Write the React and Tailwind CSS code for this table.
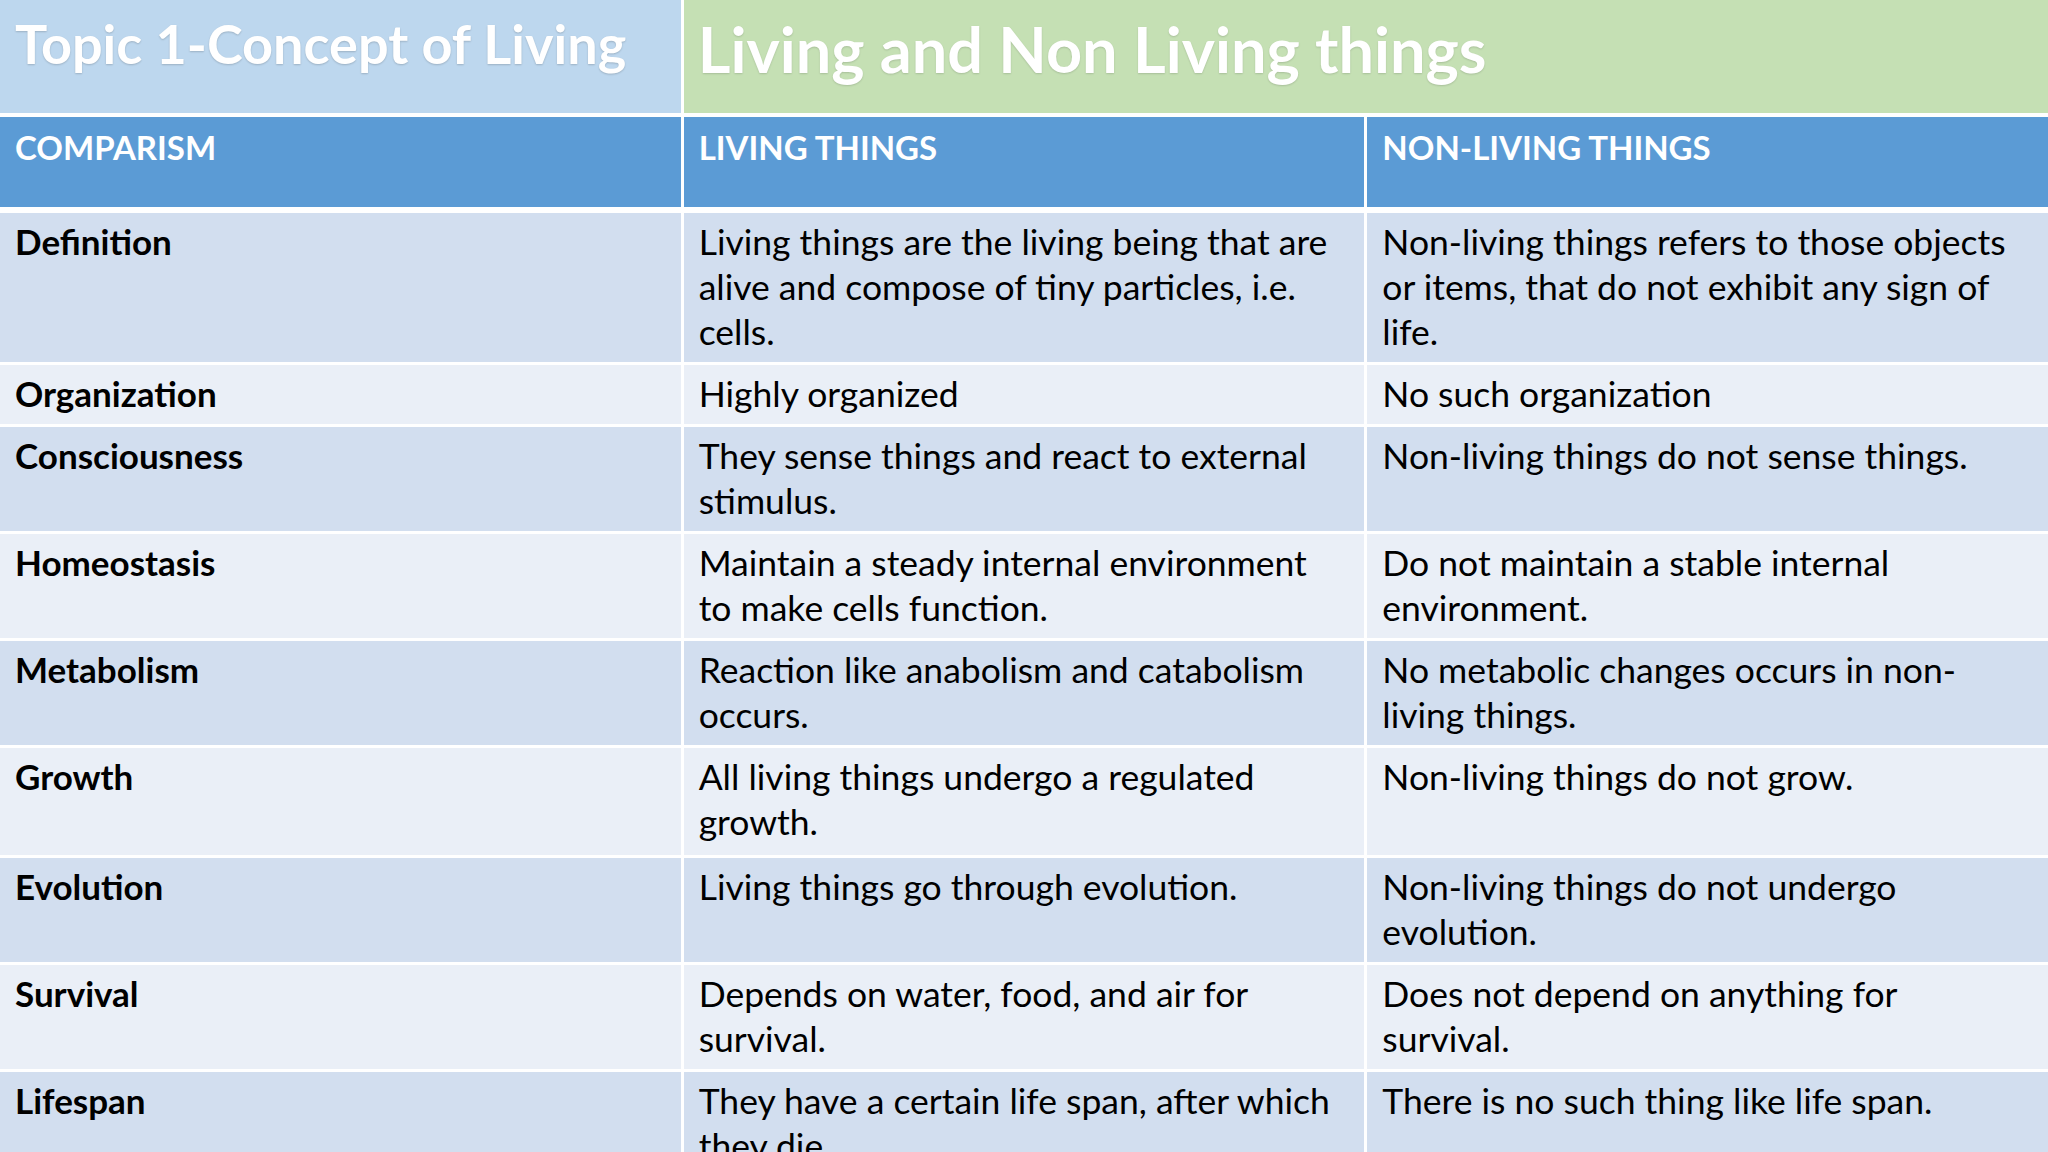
import React from 'react';

const rows = [
  {
    label: 'Definition',
    living: ['Living things are the living being that are', 'alive and compose of tiny particles, i.e.', 'cells.'],
    non: ['Non-living things refers to those objects', 'or items, that do not exhibit any sign of', 'life.'],
  },
  { label: 'Organization', living: ['Highly organized'], non: ['No such organization'] },
  {
    label: 'Consciousness',
    living: ['They sense things and react to external', 'stimulus.'],
    non: ['Non-living things do not sense things.'],
  },
  {
    label: 'Homeostasis',
    living: ['Maintain a steady internal environment', 'to make cells function.'],
    non: ['Do not maintain a stable internal', 'environment.'],
  },
  {
    label: 'Metabolism',
    living: ['Reaction like anabolism and catabolism', 'occurs.'],
    non: ['No metabolic changes occurs in non-', 'living things.'],
  },
  {
    label: 'Growth',
    living: ['All living things undergo a regulated', 'growth.'],
    non: ['Non-living things do not grow.'],
    tall: true,
  },
  {
    label: 'Evolution',
    living: ['Living things go through evolution.'],
    non: ['Non-living things do not undergo', 'evolution.'],
  },
  {
    label: 'Survival',
    living: ['Depends on water, food, and air for', 'survival.'],
    non: ['Does not depend on anything for', 'survival.'],
  },
  {
    label: 'Lifespan',
    living: ['They have a certain life span, after which', 'they die.'],
    non: ['There is no such thing like life span.'],
  },
];

const font = { fontFamily: 'Lato, "Open Sans", sans-serif' };

function Lines({ lines }) {
  return lines.map((l, i) => (
    <div key={i} className="whitespace-nowrap">
      {l}
    </div>
  ));
}

export default function App() {
  return (
    <div className="w-[2048px] h-[1152px] overflow-hidden bg-white text-black" style={font}>
      {/* title bar */}
      <div className="grid grid-cols-3 gap-x-[3px] h-[113px]">
        <div className="bg-[#bdd7ee] pl-[15px] pt-[17px]">
          <div className="text-[54px] leading-none font-bold text-white whitespace-nowrap [text-shadow:0_1px_2px_rgba(0,0,0,0.18)]">
            Topic 1-Concept of Living
          </div>
        </div>
        <div className="col-span-2 bg-[#c5e0b4] pl-[14px] pt-[17px]">
          <div className="text-[63px] leading-none font-bold text-white whitespace-nowrap [text-shadow:0_1px_2px_rgba(0,0,0,0.15)]">
            Living and Non Living things
          </div>
        </div>
      </div>

      {/* header */}
      <div className="grid grid-cols-3 gap-x-[3px] h-[90px] mt-[4px] text-white font-bold text-[33px] leading-[45px]">
        <div className="bg-[#5b9bd5] pl-[15px] pt-[8px]">COMPARISM</div>
        <div className="bg-[#5b9bd5] pl-[15px] pt-[8px]">LIVING THINGS</div>
        <div className="bg-[#5b9bd5] pl-[15px] pt-[8px]">NON-LIVING THINGS</div>
      </div>

      {/* body */}
      <div className="flex flex-col gap-y-[3px] mt-[6px] text-[35.5px] leading-[45px]">
        {rows.map((r, i) => {
          const bg = i % 2 === 0 ? 'bg-[#d2deef]' : 'bg-[#eaeff7]';
          const pad = r.tall ? 'pt-[6px] pb-[11px]' : 'pt-[6px] pb-[8px]';
          return (
            <div key={r.label} className="grid grid-cols-3 gap-x-[3px]">
              <div className={`${bg} ${pad} pl-[15px] font-bold text-[35px]`}>{r.label}</div>
              <div className={`${bg} ${pad} pl-[15px]`}>
                <Lines lines={r.living} />
              </div>
              <div className={`${bg} ${pad} pl-[15px]`}>
                <Lines lines={r.non} />
              </div>
            </div>
          );
        })}
      </div>
    </div>
  );
}
